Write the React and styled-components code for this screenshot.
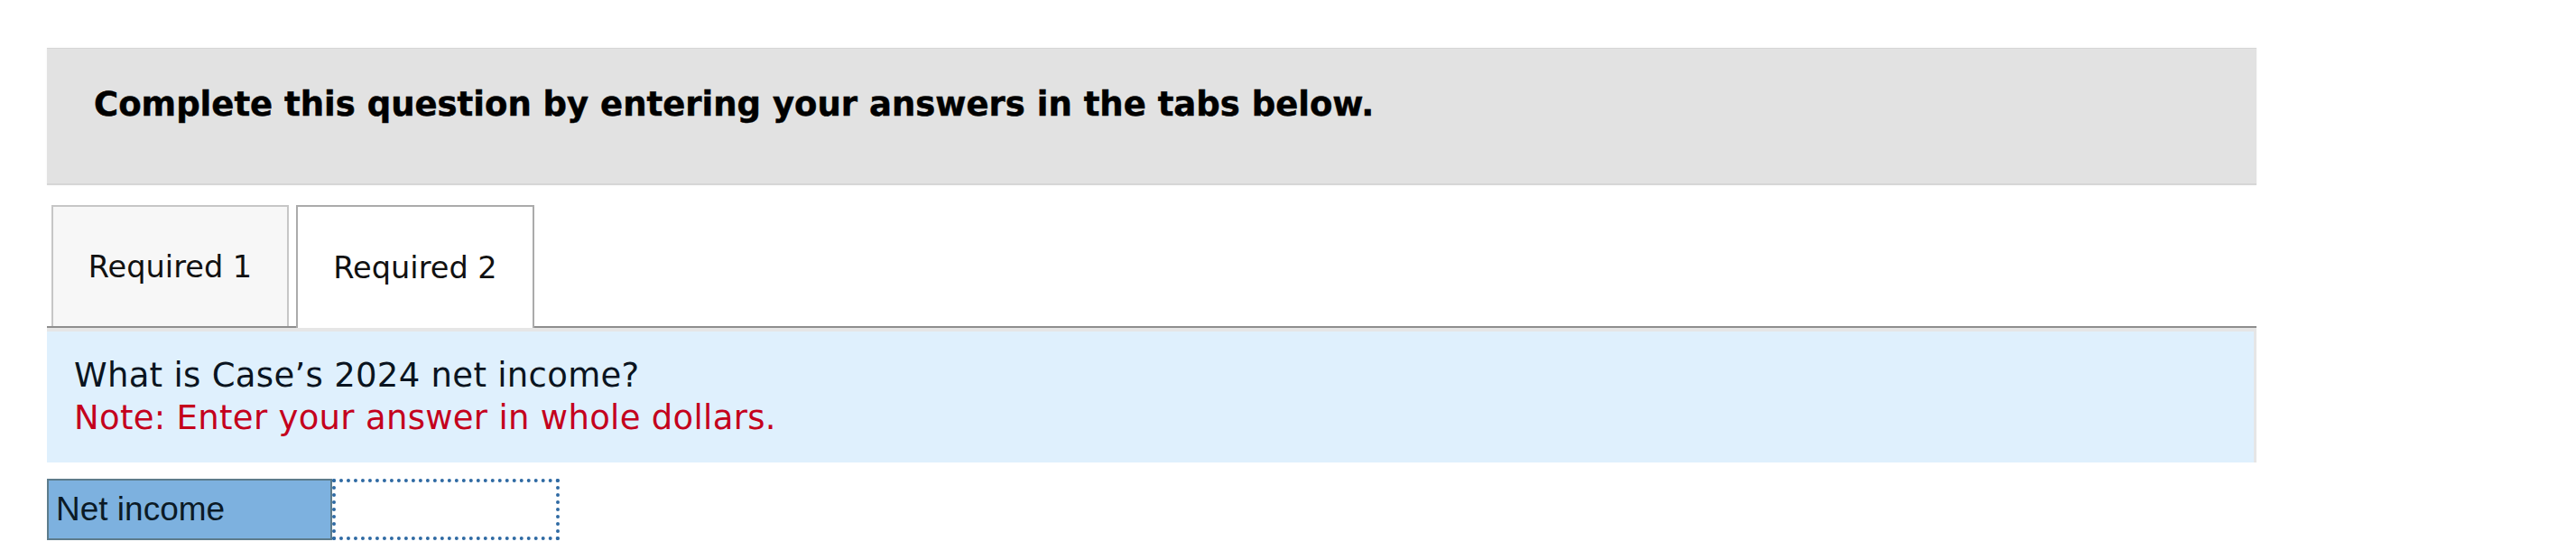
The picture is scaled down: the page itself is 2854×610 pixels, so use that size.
import React from "react";
import styled, { createGlobalStyle } from "styled-components";

const GlobalStyle = createGlobalStyle`
  html, body { margin: 0; padding: 0; background: #ffffff; }
  body { font-family: "DejaVu Sans", Verdana, sans-serif; }
`;

const Page = styled.div`
  width: 2448px;
  margin-left: 52px;
  padding-top: 53px;
`;

const Header = styled.div`
  box-sizing: border-box;
  height: 152px;
  background: #e2e2e2;
  border-top: 1px solid #d6d6d6;
  border-bottom: 2px solid #d6d6d6;
  box-shadow: 0 0 2px rgba(0, 0, 0, 0.06);
  padding: 41px 52px 0;
`;

const HeaderText = styled.h2`
  margin: 0;
  font-family: "DejaVu Sans", Verdana, sans-serif;
  font-weight: bold;
  font-size: 37px;
  line-height: 42px;
  color: #000;
  -webkit-text-stroke: 0.5px #000;
`;

const TabBar = styled.div`
  margin-top: 22px;
  display: flex;
  align-items: flex-start;
  gap: 8px;
  padding-left: 5px;
  border-bottom: 2px solid #8e8e8e;
  height: 134px;
`;

const Tab = styled.button`
  box-sizing: border-box;
  width: ${(p) => p.$w}px;
  height: ${(p) => (p.$active ? 136 : 134)}px;
  margin: 0;
  padding: 0;
  display: flex;
  align-items: center;
  justify-content: center;
  background: ${(p) => (p.$active ? "#ffffff" : "#f7f7f7")};
  border: 2px solid ${(p) => (p.$active ? "#ababab" : "#c6c6c6")};
  border-bottom: none;
  font-family: "DejaVu Sans", Verdana, sans-serif;
  font-size: 33.6px;
  color: #111;
  cursor: pointer;
  position: relative;
  z-index: ${(p) => (p.$active ? 1 : 0)};
`;

const Panel = styled.div`
  box-sizing: border-box;
  height: 149px;
  background: #dff0fd;
  border-top: 4px solid #e6e6e6;
  border-right: 3px solid #e6e6e6;
  padding: 25px 30px 0;
  font-family: "DejaVu Sans", Verdana, sans-serif;
  font-size: 37px;
  letter-spacing: 0.3px;
  line-height: 47px;
`;

const Line = styled.div`
  color: ${(p) => p.$color};
  white-space: nowrap;
`;

const AnswerRow = styled.div`
  margin-top: 18px;
  display: flex;
`;

const Label = styled.div`
  box-sizing: border-box;
  width: 316px;
  height: 68px;
  background: #7db1df;
  border: 2px solid #5d7c8c;
  padding-left: 8px;
  display: flex;
  align-items: center;
  font-family: "Liberation Sans", Arial, sans-serif;
  font-size: 37px;
  color: #0b1a26;
`;

const Input = styled.input`
  box-sizing: border-box;
  width: 252px;
  height: 68px;
  margin: 0;
  border: 4px dotted #2f6aa3;
  background: #ffffff;
  outline: none;
  font-family: "Liberation Sans", Arial, sans-serif;
  font-size: 32px;
`;

export default function App() {
  const tabs = [
    { label: "Required 1", w: 263 },
    { label: "Required 2", w: 264, active: true },
  ];
  return (
    <>
      <GlobalStyle />
      <Page>
        <Header>
          <HeaderText>Complete this question by entering your answers in the tabs below.</HeaderText>
        </Header>
        <TabBar>
          {tabs.map((t) => (
            <Tab key={t.label} $w={t.w} $active={t.active}>
              {t.label}
            </Tab>
          ))}
        </TabBar>
        <Panel>
          <Line $color="#0a1420">What is Case’s 2024 net income?</Line>
          <Line $color="#c4001c">Note: Enter your answer in whole dollars.</Line>
        </Panel>
        <AnswerRow>
          <Label>Net income</Label>
          <Input type="text" />
        </AnswerRow>
      </Page>
    </>
  );
}
